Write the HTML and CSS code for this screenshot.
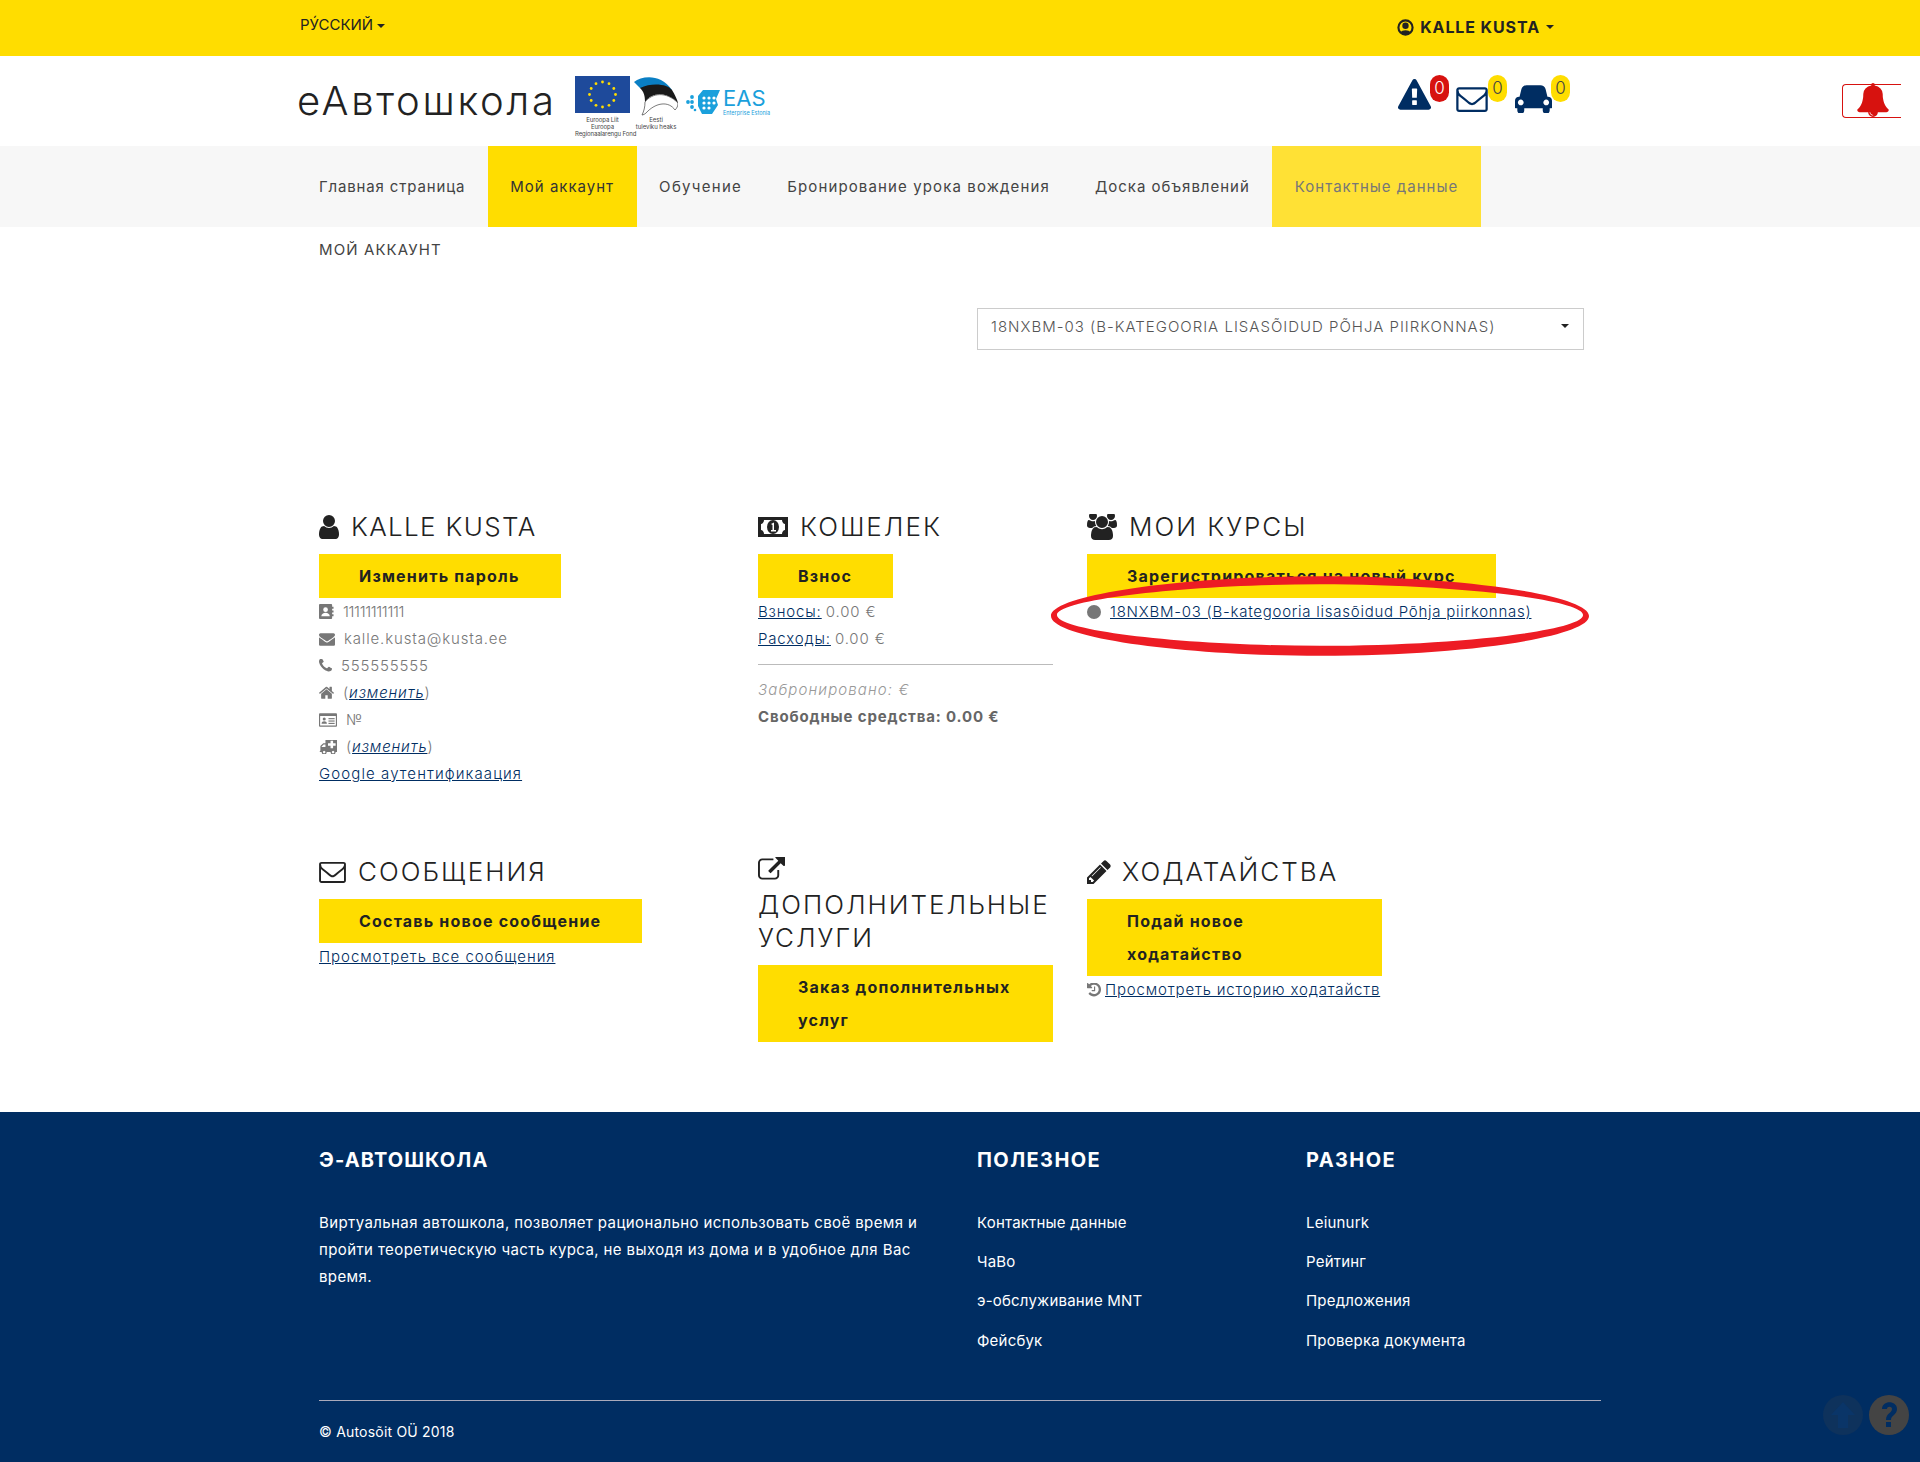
FILE: index.html
```html
<!DOCTYPE html>
<html lang="ru">
  <head>
    <meta charset="UTF-8" />
    <title>eАвтошкола</title>
    <link rel="stylesheet" href="styles.css">
  </head>
  <body>
    <div class="top-bar">
      <div class="lang">РУ́ССКИЙ <span class="caret"></span></div>
      <div class="user-menu">
        <svg class="user-icon" viewBox="0 0 24 24"><circle cx="12" cy="12" r="10" fill="none" stroke="currentColor" stroke-width="3"/><circle cx="12" cy="9.500" r="4.500" fill="currentColor"/><path d="M5 19c2-4 12-4 14 0l-3 3H8z" fill="currentColor"/></svg>
        <span>KALLE KUSTA</span>
        <span class="caret"></span>
      </div>
    </div>

    <header class="site-header">
      <div class="brand">еАвтошкола</div>
      <div class="logos">
        <div class="logo-eu">
          <svg class="eu-flag" viewBox="0 0 55 37">
            <rect width="55" height="37" fill="#1e4a9b"/>
            <g fill="#ffdd00">
              <circle cx="27.500" cy="6" r="1.400"/><circle cx="34" cy="7.700" r="1.400"/><circle cx="38.800" cy="12.500" r="1.400"/><circle cx="40.500" cy="18.500" r="1.400"/><circle cx="38.800" cy="24.500" r="1.400"/><circle cx="34" cy="29.300" r="1.400"/><circle cx="27.500" cy="31" r="1.400"/><circle cx="21" cy="29.300" r="1.400"/><circle cx="16.200" cy="24.500" r="1.400"/><circle cx="14.500" cy="18.500" r="1.400"/><circle cx="16.200" cy="12.500" r="1.400"/><circle cx="21" cy="7.700" r="1.400"/>
            </g>
          </svg>
          <div class="logo-caption">Euroopa Liit<br>Euroopa<br>Regionaalarengu Fond</div>
        </div>
        <div class="logo-est">
          <svg class="est-flag" viewBox="0 0 44 40">
            <path d="M0 6C8 0 26-3 38 14L6 12C4 10 2 8 0 6z" fill="#0a7fc4"/>
            <path d="M6 12c12-6 28-4 32 2 3 5 5 9 6 13C32 15 18 16 11 26 11 20 10 16 6 12z" fill="#1a1a1a"/>
            <path d="M11 26C18 17 32 15 44 27c0 3-1 5-3 7-6-9-19-8-29 3-1 1-3 2-4 2 2-4 3-8 3-13z" fill="#fff" stroke="#222" stroke-width=".6"/>
          </svg>
          <div class="logo-caption">Eesti<br>tuleviku heaks</div>
        </div>
        <div class="logo-eas">
          <svg class="eas-mark" viewBox="0 0 34 24">
            <path d="M12 6l5-6h17l-4 9 2 6-6 9H16l-4-8z" fill="#1aa0dc"/>
            <g fill="#fff"><circle cx="18" cy="8" r="1.600"/><circle cx="23" cy="8" r="1.600"/><circle cx="28" cy="8" r="1.600"/><circle cx="18" cy="13" r="1.600"/><circle cx="23" cy="13" r="1.600"/><circle cx="28" cy="13" r="1.600"/><circle cx="18" cy="18" r="1.600"/><circle cx="23" cy="18" r="1.600"/></g>
            <g fill="#1aa0dc"><circle cx="6" cy="7" r="1.900"/><circle cx="2" cy="12" r="1.900"/><circle cx="6" cy="12" r="1.900"/><circle cx="6" cy="17" r="1.900"/><circle cx="9" cy="20" r="1.300"/></g>
          </svg>
          <div class="eas-text">
            <div class="eas-name">EAS</div>
            <div class="eas-sub">Enterprise Estonia</div>
          </div>
        </div>
      </div>
      <div class="alerts">
        <div class="alert-item alert-warn">
          <svg viewBox="0 0 1792 1792"><path d="M1024 1375v-190q0-14-9.500-23.500t-22.500-9.500h-192q-13 0-22.500 9.500t-9.500 23.500v190q0 14 9.500 23.500t22.500 9.500h192q13 0 22.500-9.500t9.500-23.500zm-2-374l18-459q0-12-10-19-13-11-24-11h-220q-11 0-24 11-10 7-10 21l17 457q0 10 10 16.500t24 6.500h185q14 0 23.500-6.500t10.500-16.500zm-14-934l768 1408q35 63-2 126-17 29-46.500 46t-63.500 17h-1536q-34 0-63.500-17t-46.500-46q-37-63-2-126l768-1408q17-31 47-49t65-18 65 18 47 49z"/></svg>
          <span class="badge badge-red">0</span>
        </div>
        <div class="alert-item alert-mail">
          <svg viewBox="0 128 1792 1536"><path d="M1664 1504v-768q-32 36-69 66-268 206-426 338-51 43-83 67t-86.500 48.500-102.500 24.500h-2q-48 0-102.500-24.500t-86.500-48.500-83-67q-158-132-426-338-37-30-69-66v768q0 13 9.500 22.500t22.500 9.500h1472q13 0 22.500-9.500t9.500-22.500zm0-1051v-24.500l-.5-13-3-12.500-5.500-9-9-7.500-14-2.500h-1472q-13 0-22.500 9.500t-9.500 22.500q0 168 147 284 193 152 401 317 6 5 35 29.500t46 37.500 44.500 31.500 50.500 27.500 43 9h2q20 0 43-9t50.500-27.500 44.500-31.500 46-37.500 35-29.500q208-165 401-317 54-43 100.500-115.500t46.500-131.500zm128-37v1088q0 66-47 113t-113 47h-1472q-66 0-113-47t-47-113v-1088q0-66 47-113t113-47h1472q66 0 113 47t47 113z"/></svg>
          <span class="badge">0</span>
        </div>
        <div class="alert-item alert-car">
          <svg viewBox="0 128 2048 1536"><path d="M480 1088q0-66-47-113t-113-47-113 47-47 113 47 113 113 47 113-47 47-113zM1888 1088q0-66-47-113t-113-47-113 47-47 113 47 113 113 47 113-47 47-113zm160-96v384q0 14-9 23t-23 9h-96v128q0 80-56 136t-136 56-136-56-56-136v-128h-1024v128q0 80-56 136t-136 56-136-56-56-136v-128h-96q-14 0-23-9t-9-23v-384q0-93 65.500-158.500t158.500-65.500h28l105-419q23-94 104-157.500t179-63.500h768q98 0 179 63.500t104 157.500l105 419h28q93 0 158.500 65.500t65.500 158.500z" fill-rule="evenodd"/></svg>
          <span class="badge">0</span>
        </div>
      </div>
      <div class="bell-box">
        <svg viewBox="0 0 1792 1792"><path d="M912 1696q0-16-16-16-59 0-101.500-42.500t-42.500-101.500q0-16-16-16t-16 16q0 73 51.500 124.500t124.500 51.500q16 0 16-16zm816-288q0 52-38 90t-90 38h-448q0 106-75 181t-181 75-181-75-75-181h-448q-52 0-90-38t-38-90q50-42 91-88t85-119.500 74.500-158.500 50-206 19.500-260q0-152 117-282.500t307-158.500q-8-19-8-39 0-40 28-68t68-28 68 28 28 68q0 20-8 39 190 28 307 158.500t117 282.500q0 139 19.500 260t50 206 74.500 158.500 85 119.500 91 88z"/></svg>
      </div>
    </header>

    <nav class="main-nav">
      <a class="nav-item nav-home" href="#">Главная страница</a>
      <a class="nav-item nav-active" href="#">Мой аккаунт</a>
      <a class="nav-item nav-short" href="#">Обучение</a>
      <a class="nav-item nav-long" href="#">Бронирование урока вождения</a>
      <a class="nav-item" href="#">Доска объявлений</a>
      <a class="nav-item nav-contact" href="#">Контактные данные</a>
    </nav>

    <main class="content">
      <div class="breadcrumb">МОЙ АККАУНТ</div>

      <div class="course-select">
        <span>18NXBM-03 (B-KATEGOORIA LISASÕIDUD PÕHJA PIIRKONNAS)</span>
        <span class="caret"></span>
      </div>

      <div class="panels">
        <section class="panel">
          <h2 class="panel-title title-name">
            <svg class="title-icon icon-user" viewBox="256 128 1280 1536"><path d="M1536 1399q0 109-62.500 187t-150.500 78h-854q-88 0-150.500-78t-62.500-187q0-85 8.500-160.500t31.500-152 58.500-131 94-89 134.500-34.500q131 128 313 128t313-128q76 0 134.500 34.500t94 89 58.500 131 31.500 152 8.500 160.500zm-256-887q0 159-112.500 271.500t-271.500 112.500-271.500-112.500-112.500-271.500 112.500-271.500 271.500-112.500 271.500 112.500 112.500 271.500z"/></svg>
            KALLE KUSTA
          </h2>
          <a class="yellow-btn btn-password" href="#">Изменить пароль</a>
          <ul class="info-list">
            <li>
              <svg class="info-icon" viewBox="0 0 16 16"><path d="M1 0h12a1 1 0 0 1 1 1v2h1.500v2H14v2h1.500v2H14v2h1.500v2H14v2a1 1 0 0 1-1 1H1a1 1 0 0 1-1-1V1a1 1 0 0 1 1-1z"/><circle cx="7" cy="6" r="2.500" fill="#fff"/><path d="M2.500 13c0-5 9-5 9 0z" fill="#fff"/></svg>
              <span class="info-text info-digits">11111111111</span>
            </li>
            <li>
              <svg class="info-icon icon-wide" viewBox="0 128 1792 1536"><path d="M1792 710v794q0 66-47 113t-113 47h-1472q-66 0-113-47t-47-113v-794q44 49 101 87 362 246 497 345 57 42 92.500 65.500t94.500 48 110 24.500h2q51 0 110-24.500t94.500-48 92.500-65.500q170-123 498-345 57-39 100-87zm0-294q0 79-49 151t-122 123q-376 261-468 325-10 7-42.500 30.500t-54 38-52 32.500-57.500 27-50 9h-2q-23 0-50-9t-57.500-27-52-32.500-54-38-42.500-30.500q-91-64-262-182.500t-205-142.500q-62-42-117-115.500t-55-136.500q0-78 41.500-130t118.500-52h1472q65 0 112.500 47t47.500 113z"/></svg>
              <span class="info-text">kalle.kusta@kusta.ee</span>
            </li>
            <li>
              <svg class="info-icon icon-phone" viewBox="192 192 1408 1408"><path d="M1600 1240q0 27-10 70.500t-21 68.500q-21 50-122 106-94 51-186 51-27 0-53-3.500t-57.500-12.500-47-14.500-55.500-20.500-49-18q-98-35-175-83-127-79-264-216t-216-264q-48-77-83-175-3-9-18-49t-20.500-55.500-14.500-47-12.500-57.500-3.500-53q0-92 51-186 56-101 106-122 25-11 68.500-21t70.500-10q14 0 21 3 18 6 53 76 11 19 30 54t35 63.500 31 53.500q3 4 17.500 25t21.500 35.500 7 28.500q0 20-28.500 50t-62 55-62 53-28.500 46q0 9 5 22.500t8.500 20.500 14 24 11.500 19q76 137 174 235t235 174q2 1 19 11.500t24 14 20.500 8.500 22.500 5q18 0 46-28.500t53-62 55-62 50-28.500q14 0 28.500 7t35.500 21.500 25 17.500q25 15 53.500 31t63.500 35 54 30q70 35 76 53 3 7 3 21z"/></svg>
              <span class="info-text">555555555</span>
            </li>
            <li>
              <svg class="info-icon icon-home" viewBox="90 192 1610 1344"><path d="M1472 992v480q0 26-19 45t-45 19h-384v-384h-256v384h-384q-26 0-45-19t-19-45v-480q0-1 .5-3t.5-3l575-474 575 474q1 2 1 6zm223-69l-62 74q-8 9-21 11h-3q-13 0-21-7l-692-577-692 577q-12 8-24 7-13-2-21-11l-62-74q-8-10-7-23.500t11-21.500l719-599q32-26 76-26t76 26l244 204v-195q0-14 9-23t23-9h192q14 0 23 9t9 23v408l219 182q10 8 11 21.500t-7 23.500z"/></svg>
              <span class="info-text">(<a class="edit-link" href="#">изменить</a>)</span>
            </li>
            <li>
              <svg class="info-icon icon-card" viewBox="0 0 19 14"><path d="M1 0h17a1 1 0 0 1 1 1v12a1 1 0 0 1-1 1H1a1 1 0 0 1-1-1V1a1 1 0 0 1 1-1z"/><rect x="1.200" y="2.800" width="16.600" height="10" fill="#fff"/><circle cx="5.500" cy="6" r="1.600"/><path d="M2.700 11c0-3.400 5.600-3.400 5.600 0z"/><rect x="10" y="5" width="6.500" height="1.200"/><rect x="10" y="7.500" width="6.500" height="1.200"/><rect x="10" y="10" width="6.500" height="1.200"/></svg>
              <span class="info-text">№</span>
            </li>
            <li>
              <svg class="info-icon icon-card" viewBox="0 192 1792 1408"><path d="M640 1408q0-52-38-90t-90-38-90 38-38 90 38 90 90 38 90-38 38-90zm-384-512h384v-256h-158q-14 2-22 9l-195 195q-7 12-9 22v30zm1280 512q0-52-38-90t-90-38-90 38-38 90 38 90 90 38 90-38 38-90zm128-672v-192q0-14-9-23t-23-9h-224v-224q0-14-9-23t-23-9h-192q-14 0-23 9t-9 23v224h-224q-14 0-23 9t-9 23v192q0 14 9 23t23 9h224v224q0 14 9 23t23 9h192q14 0 23-9t9-23v-224h224q14 0 23-9t9-23zm256-544v1152q0 26-19 45t-45 19h-192q0 106-75 181t-181 75-181-75-75-181h-384q0 106-75 181t-181 75-181-75-75-181h-128q-26 0-45-19t-19-45 19-45 45-19v-416q0-26 13-58t32-51l198-198q19-19 51-32t58-13h160v-320q0-26 19-45t45-19h1152q26 0 45 19t19 45z"/></svg>
              <span class="info-text">(<a class="edit-link" href="#">изменить</a>)</span>
            </li>
            <li><a class="long-link" href="#">Google аутентификаация</a></li>
          </ul>
        </section>

        <section class="panel">
          <h2 class="panel-title">
            <svg class="title-icon icon-money" viewBox="0 0 30 20"><path d="M0 0h30v20H0z"/><path d="M6 3h18c0 2 1.500 4 3 4v6c-1.500 0-3 2-3 4H6c0-2-1.500-4-3-4V7c1.500 0 3-2 3-4z" fill="#fff"/><ellipse cx="15" cy="10" rx="6" ry="7"/><path d="M13 7l3-1.500V13h2v1.500h-5V13h1.500V8z" fill="#fff"/></svg>
            КОШЕЛЕК
          </h2>
          <a class="yellow-btn btn-deposit" href="#">Взнос</a>
          <ul class="info-list wallet-list">
            <li><a href="#">Взносы:</a> 0.00 €</li>
            <li><a href="#">Расходы:</a> 0.00 €</li>
          </ul>
          <hr class="wallet-line">
          <ul class="info-list">
            <li class="reserved">Забронировано: €</li>
            <li class="balance">Свободные средства: 0.00 €</li>
          </ul>
        </section>

        <section class="panel panel-courses">
          <h2 class="panel-title">
            <svg class="title-icon icon-users" viewBox="0 128 1920 1664"><path d="M593 896q-162 5-265 128h-134q-82 0-138-40.500t-56-118.500q0-353 124-353 6 0 43.500 21t97.500 42.500 119 21.500q67 0 133-23-5 37-5 66 0 139 81 256zm1071 637q0 120-73 189.500t-194 69.500h-874q-121 0-194-69.500t-73-189.500q0-53 3.500-103.500t14-109 26.500-108.500 43-97.500 62-81 85.500-53.500 111.500-20q10 0 43 21.500t73 48 107 48 135 21.500 135-21.500 107-48 73-48 43-21.500q61 0 111.500 20t85.500 53.500 62 81 43 97.500 26.500 108.500 14 109 3.500 103.500zm-1024-1277q0 106-75 181t-181 75-181-75-75-181 75-181 181-75 181 75 75 181zm704 384q0 159-112.500 271.500t-271.500 112.500-271.500-112.500-112.500-271.500 112.500-271.500 271.500-112.500 271.500 112.500 112.500 271.500zm576 225q0 78-56 118.500t-138 40.500h-134q-103-123-265-128 81-117 81-256 0-29-5-66 66 23 133 23 59 0 119-21.500t97.500-42.500 43.500-21q124 0 124 353zm-128-609q0 106-75 181t-181 75-181-75-75-181 75-181 181-75 181 75 75 181z"/></svg>
            МОИ КУРСЫ
          </h2>
          <a class="yellow-btn btn-course" href="#">Зарегистрироваться на новый курс</a>
          <ul class="info-list">
            <li class="course-row"><span class="dot"></span><a href="#">18NXBM-03 (B-kategooria lisasõidud Põhja piirkonnas)</a></li>
          </ul>
          <svg class="red-ring" viewBox="0 0 544 82"><path fill-rule="evenodd" d="M272 1C130 1 1 20 1 41s125 40 271 40 271-19 271-40S414 1 272 1zM272 9C140 9 7 24 7 40s130 31 265 31 265-15 265-31S404 9 272 9z" fill="#ed1c24"/></svg>
        </section>

        <section class="panel">
          <h2 class="panel-title">
            <svg class="title-icon icon-mail" viewBox="0 128 1792 1536"><path d="M1664 1504v-768q-32 36-69 66-268 206-426 338-51 43-83 67t-86.500 48.500-102.500 24.500h-2q-48 0-102.500-24.500t-86.500-48.500-83-67q-158-132-426-338-37-30-69-66v768q0 13 9.500 22.500t22.500 9.500h1472q13 0 22.500-9.500t9.500-22.500zm0-1051v-24.500l-.5-13-3-12.500-5.500-9-9-7.500-14-2.500h-1472q-13 0-22.500 9.500t-9.500 22.500q0 168 147 284 193 152 401 317 6 5 35 29.500t46 37.500 44.500 31.500 50.500 27.500 43 9h2q20 0 43-9t50.500-27.500 44.500-31.500 46-37.500 35-29.500q208-165 401-317 54-43 100.500-115.500t46.500-131.500zm128-37v1088q0 66-47 113t-113 47h-1472q-66 0-113-47t-47-113v-1088q0-66 47-113t113-47h1472q66 0 113 47t47 113z"/></svg>
            СООБЩЕНИЯ
          </h2>
          <a class="yellow-btn btn-message" href="#">Составь новое сообщение</a>
          <ul class="info-list">
            <li class="messages-row"><a href="#">Просмотреть все сообщения</a></li>
          </ul>
        </section>

        <section class="panel">
          <h2 class="panel-title title-stacked">
            <svg class="title-icon icon-link" viewBox="0 64 1792 1536"><path d="M1408 928v320q0 119-84.500 203.500t-203.500 84.500h-832q-119 0-203.500-84.500t-84.500-203.500v-832q0-119 84.500-203.500t203.500-84.500h704q14 0 23 9t9 23v64q0 14-9 23t-23 9h-704q-66 0-113 47t-47 113v832q0 66 47 113t113 47h832q66 0 113-47t47-113v-320q0-14 9-23t23-9h64q14 0 23 9t9 23zm384-864v512q0 26-19 45t-45 19-45-19l-176-176-652 652q-10 10-23 10t-23-10l-114-114q-10-10-10-23t10-23l652-652-176-176q-19-19-19-45t19-45 45-19h512q26 0 45 19t19 45z"/></svg>
            <span>ДОПОЛНИТЕЛЬНЫЕ УСЛУГИ</span>
          </h2>
          <a class="yellow-btn btn-full" href="#">Заказ дополнительных услуг</a>
        </section>

        <section class="panel">
          <h2 class="panel-title">
            <svg class="title-icon icon-pencil" viewBox="128 128 1536 1536"><path d="M491 1536l91-91-235-235-91 91v107h128v128h107zm523-928q0-22-22-22-10 0-17 7l-542 542q-7 7-7 17 0 22 22 22 10 0 17-7l542-542q7-7 7-17zm-54-192l416 416-832 832h-416v-416zm683 96q0 53-37 90l-166 166-416-416 166-165q36-38 90-38 53 0 91 38l235 234q37 39 37 91z"/></svg>
            ХОДАТАЙСТВА
          </h2>
          <a class="yellow-btn btn-full" href="#">Подай новое ходатайство</a>
          <ul class="info-list">
            <li class="history-row">
              <svg class="info-icon icon-history" viewBox="128 256 1536 1408"><path d="M1664 896q0 156-61 298t-164 245-245 164-298 61q-172 0-327-72.500t-264-204.500q-7-10-6.500-22.500t8.500-20.500l137-138q10-9 25-9 16 2 23 12 73 95 179 147t225 52q104 0 198.500-40.500t163.500-109.500 109.500-163.500 40.500-198.500-40.500-198.500-109.500-163.500-163.500-109.500-198.500-40.500q-98 0-188 35.500t-160 101.500l137 138q31 30 14 69-17 40-59 40h-448q-26 0-45-19t-19-45v-448q0-42 40-59 39-17 69 14l130 129q107-101 244.500-156.500t284.500-55.500q156 0 298 61t245 164 164 245 61 298zm-640-288v448q0 14-9 23t-23 9h-320q-14 0-23-9t-9-23v-64q0-14 9-23t23-9h224v-352q0-14 9-23t23-9h64q14 0 23 9t9 23z"/></svg>
              <a href="#">Просмотреть историю ходатайств</a>
            </li>
          </ul>
        </section>
      </div>
    </main>

    <footer class="site-footer">
      <div class="footer-cols">
        <div class="footer-about">
          <h4>Э-АВТОШКОЛА</h4>
          <p>Виртуальная автошкола, позволяет рационально использовать своё время и пройти теоретическую часть курса, не выходя из дома и в удобное для Вас время.</p>
        </div>
        <div class="footer-links">
          <h4>ПОЛЕЗНОЕ</h4>
          <a href="#">Контактные данные</a>
          <a href="#">ЧаВо</a>
          <a href="#">э-обслуживание MNT</a>
          <a href="#">Фейсбук</a>
        </div>
        <div class="footer-links">
          <h4>РАЗНОЕ</h4>
          <a href="#">Leiunurk</a>
          <a href="#">Рейтинг</a>
          <a href="#">Предложения</a>
          <a href="#">Проверка документа</a>
        </div>
      </div>
      <div class="copyright">© Autosõit OÜ 2018</div>
      <div class="float-btns">
        <span class="float-btn float-up">
          <svg viewBox="0 0 40 40"><path d="M20 7l12 13h-7v13H15V20H8z"/></svg>
        </span>
        <span class="float-btn float-help">
          <svg viewBox="0 0 40 40"><path d="M13 14c0-9 15-9 15 0 0 6-6 6-6 11h-5c0-7 6-7 6-11 0-3-5-3-5 0zM17 27h5v5h-5z"/></svg>
        </span>
      </div>
    </footer>
  </body>
</html>
```

FILE: styles.css
```css
* {
  margin: 0;
  padding: 0;
  box-sizing: border-box;
}

body {
  font-family: Inter, "Open Sans", sans-serif;
  font-size: 15px;
  font-weight: 300;
  letter-spacing: 0.85px;
  color: #777;
  background: #fff;
  position: relative;
}

a {
  color: #002d62;
}

ul {
  list-style: none;
}

.caret {
  display: inline-block;
  border-top: 4px solid #222;
  border-left: 4px solid transparent;
  border-right: 4px solid transparent;
  vertical-align: middle;
}

/* top bar */
.top-bar {
  height: 56px;
  background: #ffdd00;
  color: #222;
  display: flex;
  justify-content: space-between;
  padding: 0 366px 0 300px;
}

.lang {
  font-size: 15px;
  font-weight: 400;
  line-height: 50px;
  letter-spacing: 0;
}

.user-menu {
  display: flex;
  align-items: center;
  gap: 6px;
  font-size: 16px;
  font-weight: 700;
  letter-spacing: 0.9px;
  padding-bottom: 2px;
}

.user-icon {
  width: 17px;
  height: 17px;
}

/* header */
.site-header {
  height: 90px;
  display: flex;
  padding-left: 297px;
  position: relative;
}

.brand {
  font-size: 40px;
  font-weight: 300;
  color: #222;
  line-height: 90px;
  width: 278px;
  letter-spacing: 2.700px;
}

.logos {
  display: flex;
  padding-top: 20px;
  letter-spacing: 0;
}

.logo-caption {
  font-size: 6px;
  font-weight: 400;
  line-height: 7px;
  text-align: center;
  color: #444;
  white-space: nowrap;
}

.logo-eu {
  width: 59px;
}

.logo-eu .logo-caption {
  width: 55px;
  letter-spacing: -0.1px;
}

.eu-flag {
  display: block;
  width: 55px;
  height: 37px;
  margin-bottom: 3px;
}

.logo-est {
  width: 52px;
}

.logo-est .logo-caption {
  width: 44px;
}

.est-flag {
  display: block;
  width: 44px;
  height: 40px;
}

.logo-eas {
  display: flex;
  align-items: flex-start;
  gap: 3px;
  padding-top: 10px;
}

.eas-mark {
  width: 34px;
  height: 24px;
  margin-top: 4px;
}

.eas-name {
  font-size: 22px;
  font-weight: 400;
  line-height: 24px;
  color: #1aa0dc;
}

.eas-sub {
  font-size: 5.500px;
  font-weight: 400;
  line-height: 7px;
  color: #1aa0dc;
  white-space: nowrap;
}

.alerts {
  position: absolute;
  left: 1398px;
  top: 19px;
  display: flex;
  letter-spacing: 0;
}

.alert-item {
  position: relative;
  height: 38px;
  display: flex;
  align-items: flex-end;
}

.alert-item svg {
  display: block;
  fill: #002d62;
}

.alert-warn {
  width: 58px;
}

.alert-warn svg {
  width: 33px;
  height: 33px;
  margin-bottom: 1px;
}

.alert-mail {
  width: 59px;
}

.alert-mail svg {
  width: 32px;
  height: 27px;
  margin-bottom: 1px;
}

.alert-car svg {
  width: 37px;
  height: 28px;
}

.badge {
  position: absolute;
  top: 0;
  min-width: 19px;
  height: 27px;
  border-radius: 10px;
  background: #ffdd00;
  color: #444;
  font-size: 17px;
  line-height: 26px;
  text-align: center;
}

.alert-warn .badge {
  left: 32px;
}

.alert-mail .badge {
  left: 32px;
}

.alert-car .badge {
  left: 36px;
}

.badge-red {
  background: #d7120f;
  color: #fff;
}

.bell-box {
  position: absolute;
  left: 1842px;
  top: 28px;
  width: 59px;
  height: 34px;
  border: 1px solid #d7120f;
  border-right: 0;
  border-radius: 4px 0 0 4px;
}

.bell-box svg {
  display: block;
  position: absolute;
  left: 13px;
  top: -2px;
  width: 34px;
  height: 34px;
  fill: #d7120f;
}

/* nav */
.main-nav {
  height: 81px;
  background: #f7f7f7;
  display: flex;
  padding-left: 296.500px;
}

.nav-item {
  padding: 0 22.500px;
  line-height: 81px;
  font-size: 15px;
  font-weight: 400;
  letter-spacing: 1px;
  color: #444;
  text-decoration: none;
  white-space: nowrap;
}

.nav-home {
  letter-spacing: 0.85px;
}

.nav-short {
  letter-spacing: 1.300px;
}

.nav-long {
  letter-spacing: 1.130px;
}

.nav-active {
  background: #ffdd00;
  color: #333;
}

.nav-contact {
  background: #ffe135;
  color: #777;
}

/* content */
.content {
  padding: 13px 0 70px 319px;
}

.breadcrumb {
  height: 20px;
  line-height: 20px;
  font-size: 15px;
  font-weight: 400;
  letter-spacing: 1.100px;
  color: #444;
}

.course-select {
  margin: 48px 0 0 658px;
  width: 607px;
  height: 42px;
  border: 1px solid #ccc;
  padding: 0 14px 6px 13px;
  display: flex;
  align-items: center;
  justify-content: space-between;
  color: #555;
  letter-spacing: 1px;
}

.panels {
  margin-top: 160px;
  display: grid;
  grid-template-columns: 405px 295px 295px;
  column-gap: 34px;
  row-gap: 68px;
}

.panel {
  position: relative;
}

.panel-title {
  font-size: 26px;
  font-weight: 300;
  line-height: 33px;
  letter-spacing: 2px;
  color: #222;
  margin-bottom: 11px;
  white-space: nowrap;
  display: flex;
  align-items: center;
  gap: 12px;
}

.title-name {
  letter-spacing: 1.350px;
}

.title-stacked {
  display: block;
  white-space: normal;
  padding-top: 2px;
}

.title-stacked svg {
  display: block;
}

.title-icon {
  fill: #222;
  flex: none;
}

.icon-user {
  width: 20px;
  height: 24px;
}

.icon-money {
  width: 30px;
  height: 20px;
}

.icon-users {
  width: 30px;
  height: 26px;
}

.icon-mail {
  width: 27px;
  height: 23px;
}

.icon-link {
  width: 27px;
  height: 24px;
  margin-bottom: 7px;
}

.icon-pencil {
  width: 24px;
  height: 24px;
  margin-right: -1px;
}

.yellow-btn {
  display: block;
  background: #ffdd00;
  color: #222;
  font-weight: 700;
  font-size: 16px;
  line-height: 33px;
  letter-spacing: 1.200px;
  padding: 5.500px 40px;
  text-decoration: none;
}

.btn-password {
  width: 242px;
}

.btn-deposit {
  width: 135px;
}

.btn-course {
  width: 409px;
  white-space: nowrap;
}

.btn-message {
  width: 323px;
}

.btn-full {
  width: 295px;
}

.info-list li {
  line-height: 27px;
  white-space: nowrap;
  display: flex;
  align-items: center;
  gap: 9px;
}

.wallet-list li {
  gap: 4px;
}

.long-link {
  letter-spacing: 1.100px;
}

.info-digits {
  letter-spacing: -0.35px;
}

.info-icon {
  width: 15px;
  height: 15px;
  fill: #777;
  flex: none;
}

.icon-wide {
  width: 16px;
  height: 14px;
}

.icon-phone {
  width: 13px;
  height: 13px;
}

.icon-home {
  width: 15px;
  height: 13px;
}

.icon-card {
  width: 18px;
  height: 14px;
}

.info-list .history-row {
  gap: 4px;
}

.icon-history {
  width: 14px;
  height: 14px;
}

.edit-link {
  font-style: italic;
}

.wallet-line {
  border: 0;
  border-top: 1px solid #bbb;
  margin: 12px 0 11px;
}

.reserved {
  font-style: italic;
  color: #999;
  letter-spacing: 1.100px;
}

.balance {
  font-weight: 700;
  color: #666;
}

.course-row {
  letter-spacing: 0.75px;
}

.messages-row {
  letter-spacing: 0.95px;
}

.dot {
  width: 14px;
  height: 14px;
  border-radius: 50%;
  background: #777;
  flex: none;
}

.red-ring {
  position: absolute;
  left: -37px;
  top: 65px;
  width: 540px;
  height: 82px;
}

/* footer */
.site-footer {
  background: #002d62;
  color: #fff;
  height: 350px;
  padding: 35px 319px 0;
  font-weight: 400;
  letter-spacing: 0.2px;
  position: relative;
}

.footer-cols {
  display: grid;
  grid-template-columns: 658px 329px 1fr;
  height: 254px;
  border-bottom: 1px solid #aab;
}

.site-footer h4 {
  font-size: 20px;
  font-weight: 700;
  line-height: 27px;
  letter-spacing: 1.100px;
  margin-bottom: 35px;
}

.footer-links h4 {
  letter-spacing: 1.400px;
}

.footer-about p {
  width: 620px;
  line-height: 27px;
  letter-spacing: 0.4px;
}

.footer-links a {
  display: block;
  color: #fff;
  text-decoration: none;
  line-height: 27px;
  margin-bottom: 12.200px;
}

.copyright {
  line-height: 62px;
  font-size: 14px;
}

.float-btns {
  position: absolute;
  right: 11px;
  bottom: 27px;
  display: flex;
  gap: 6px;
}

.float-btn {
  width: 40px;
  height: 40px;
  border-radius: 50%;
  display: block;
}

.float-btn svg {
  display: block;
  fill: #002d62;
}

.float-up {
  background: rgba(68, 68, 68, 0.2);
}

.float-up svg {
  fill: #0a3568;
}

.float-help {
  background: #444;
}
```
